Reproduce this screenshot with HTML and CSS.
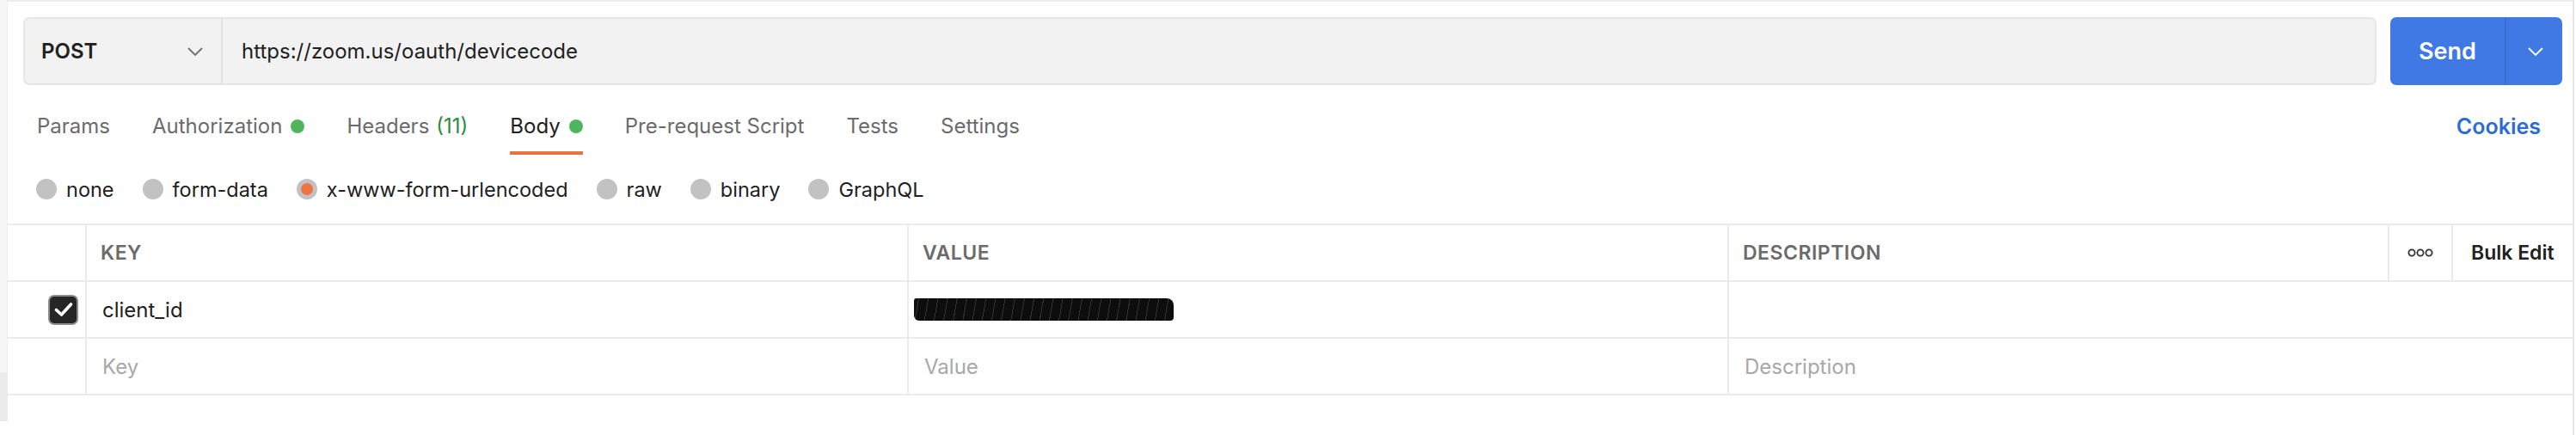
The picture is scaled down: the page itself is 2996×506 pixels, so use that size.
FILE: index.html
```html
<!DOCTYPE html>
<html lang="en">
<head>
<meta charset="utf-8">
<title>Request</title>
<link rel="stylesheet" href="styles.css">
</head>
<body>
<div class="app">
  <aside class="rail">
    <div class="rail-fill"></div>
    <div class="rail-block"></div>
    <div class="rail-end"></div>
  </aside>
  <main class="main">
    <div class="url-row">
      <div class="url-box">
        <div class="method">
          <span class="method-name">POST</span>
          <svg class="chev" width="18" height="10" viewBox="0 0 18 10"><polyline points="1,1 9,9 17,1" fill="none" stroke="#707070" stroke-width="1.8"/></svg>
        </div>
        <div class="url-text">https://zoom.us/oauth/devicecode</div>
      </div>
      <div class="send">
        <span class="send-label">Send</span>
        <span class="send-drop">
          <svg width="18" height="10" viewBox="0 0 18 10"><polyline points="1,1 9,9 17,1" fill="none" stroke="#ffffff" stroke-width="1.8"/></svg>
        </span>
      </div>
    </div>

    <div class="tabs-row">
      <nav class="tabs">
        <span class="tab">Params</span>
        <span class="tab">Authorization <i class="dot"></i></span>
        <span class="tab">Headers <span class="count">(11)</span></span>
        <span class="tab active">Body <i class="dot"></i></span>
        <span class="tab">Pre-request Script</span>
        <span class="tab">Tests</span>
        <span class="tab">Settings</span>
      </nav>
      <span class="cookies">Cookies</span>
    </div>

    <div class="radios">
      <span class="radio"><i class="rb"></i>none</span>
      <span class="radio"><i class="rb"></i>form-data</span>
      <span class="radio"><i class="rb on"></i>x-www-form-urlencoded</span>
      <span class="radio"><i class="rb"></i>raw</span>
      <span class="radio"><i class="rb"></i>binary</span>
      <span class="radio"><i class="rb"></i>GraphQL</span>
    </div>

    <div class="table">
      <div class="cell"></div>
      <div class="cell head">KEY</div>
      <div class="cell head">VALUE</div>
      <div class="cell head">DESCRIPTION</div>
      <div class="cell icon">
        <svg width="30" height="10" viewBox="0 0 30 10"><circle cx="5" cy="5" r="3.6" fill="none" stroke="#333" stroke-width="1.8"/><circle cx="15" cy="5" r="3.6" fill="none" stroke="#333" stroke-width="1.8"/><circle cx="25" cy="5" r="3.6" fill="none" stroke="#333" stroke-width="1.8"/></svg>
      </div>
      <div class="cell bulk">Bulk Edit</div>

      <div class="cell check-cell">
        <span class="checkbox">
          <svg width="22" height="18" viewBox="0 0 22 18"><polyline points="2.5,9.5 8.5,15 19.5,3" fill="none" stroke="#fff" stroke-width="3.6" stroke-linecap="round" stroke-linejoin="round"/></svg>
        </span>
      </div>
      <div class="cell body">client_id</div>
      <div class="cell body"><span class="redact"></span></div>
      <div class="cell body wide"></div>

      <div class="cell"></div>
      <div class="cell body ph">Key</div>
      <div class="cell body ph">Value</div>
      <div class="cell body ph wide">Description</div>
    </div>
  </main>
</div>
</body>
</html>
```

FILE: styles.css
```css
* { box-sizing: border-box; }

html, body {
  margin: 0;
  padding: 0;
  background: #ffffff;
}

body {
  font-family: "Inter", "Noto Sans", sans-serif;
  color: #212121;
  width: 2996px;
  height: 506px;
  overflow: hidden;
}

.app {
  display: flex;
  height: 506px;
  padding-right: 2px;
}

.rail {
  width: 9px;
  display: flex;
  flex-direction: column;
}

.rail-fill {
  flex: 0 0 433px;
  background: #f7f7f7;
  border-right: 1px solid #efefef;
}

.rail-block {
  flex: 0 0 57px;
  background: #ebebeb;
}

.rail-end {
  flex: 1;
  background: #ffffff;
}

.main {
  flex: 1;
  border-top: 2px solid #ececec;
  border-right: 2px solid #e6e6e6;
  display: flex;
  flex-direction: column;
  min-width: 0;
}

/* URL row */
.url-row {
  display: flex;
  align-items: center;
  gap: 16px;
  padding: 18px 12px 0 18px;
}

.url-box {
  flex: 1;
  height: 79px;
  display: flex;
  background: #f2f2f2;
  border: 2px solid #e6e6e6;
  border-radius: 7px;
}

.method {
  width: 230px;
  display: flex;
  align-items: center;
  justify-content: space-between;
  padding: 0 21px 0 19px;
  border-right: 2px solid #e3e3e3;
}

.method-name {
  font-size: 24px;
  font-weight: 600;
  color: #212121;
}

.chev { display: block; }

.url-text {
  display: flex;
  align-items: center;
  padding-left: 22px;
  font-size: 24px;
  color: #212121;
}

.send {
  width: 200px;
  height: 79px;
  display: flex;
  background: #4079e4;
  border-radius: 7px;
  color: #ffffff;
}

.send-label {
  flex: 0 0 135px;
  display: flex;
  align-items: center;
  justify-content: center;
  font-size: 27px;
  font-weight: 600;
  border-right: 2px solid #3a6ed2;
}

.send-drop {
  flex: 1;
  display: flex;
  align-items: center;
  justify-content: center;
  padding-left: 2px;
}

/* Tabs */
.tabs-row {
  display: flex;
  align-items: flex-start;
  justify-content: space-between;
  margin-top: 33px;
  padding: 0 37px 0 34px;
}

.tabs {
  display: flex;
  gap: 49px;
}

.tab {
  display: flex;
  align-items: center;
  gap: 10px;
  font-size: 24px;
  line-height: 30px;
  color: #6b6b6b;
  padding-bottom: 14px;
  border-bottom: 4px solid transparent;
}

.tab.active {
  color: #212121;
  border-bottom-color: #e9733d;
}

.dot {
  width: 16px;
  height: 16px;
  border-radius: 50%;
  background: #4fb65e;
  display: inline-block;
}

.count {
  color: #2e8a3d;
  margin-left: -2px;
}

.cookies {
  font-size: 25px;
  line-height: 30px;
  font-weight: 600;
  color: #2f6bd6;
}

/* Radios */
.radios {
  display: flex;
  align-items: center;
  gap: 33px;
  height: 32px;
  margin: 24px 0 24px;
  padding-left: 33px;
}

.radio {
  display: flex;
  align-items: center;
  gap: 11px;
  font-size: 23.5px;
  color: #212121;
}

.rb {
  width: 24px;
  height: 24px;
  border-radius: 50%;
  background: #c2c2c2;
  display: flex;
  align-items: center;
  justify-content: center;
}

.rb.on::after {
  content: "";
  width: 14px;
  height: 14px;
  border-radius: 50%;
  background: #ec7540;
}

/* Table */
.table {
  display: grid;
  grid-template-columns: 92px 956px 954px 768px 74px 1fr;
  grid-auto-rows: 66px;
  border-top: 2px solid #ebebeb;
}

.cell {
  border-right: 2px solid #ebebeb;
  border-bottom: 2px solid #ebebeb;
  display: flex;
  align-items: center;
  min-width: 0;
}

.cell.head {
  padding-left: 16px;
  font-size: 23px;
  letter-spacing: 0.5px;
  font-weight: 600;
  color: #6b6b6b;
}

.cell.icon {
  justify-content: center;
}

.cell.bulk {
  border-right: none;
  padding-left: 21px;
  font-size: 23px;
  font-weight: 600;
  color: #212121;
}

.cell.body {
  padding-left: 18px;
  font-size: 24px;
  color: #212121;
}

.cell.ph {
  color: #a8a8a8;
}

.cell.wide {
  grid-column: span 3;
  border-right: none;
}

.check-cell {
  justify-content: flex-end;
  padding-right: 8px;
}

.checkbox {
  width: 35px;
  height: 35px;
  border-radius: 7px;
  background: #262626;
  border: 2px solid #8c8c8c;
  display: flex;
  align-items: center;
  justify-content: center;
}

.redact {
  display: block;
  width: 302px;
  height: 26px;
  margin-left: -12px;
  background:
    repeating-linear-gradient(100deg, rgba(255,255,255,0) 0 5px, rgba(120,120,120,0.35) 5px 6px, rgba(255,255,255,0) 6px 11px),
    #0d0d0d;
  border-radius: 3px 8px 4px 6px;
}
```
